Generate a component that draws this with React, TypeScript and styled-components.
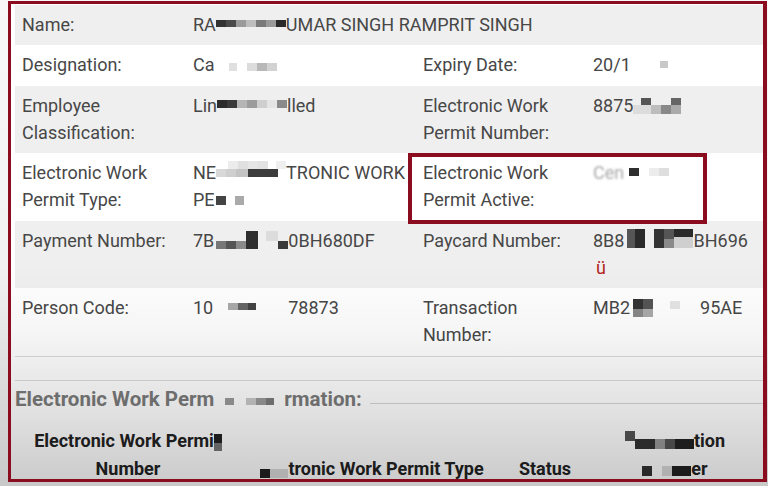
import React from "react";
import styled, { createGlobalStyle } from "styled-components";

const Global = createGlobalStyle`
  html, body { margin: 0; padding: 0; }
  body {
    width: 768px;
    height: 486px;
    overflow: hidden;
    background: linear-gradient(to bottom, #f8f8f8 0%, #f2f2f2 55%, #c8c8c8 100%);
    font-family: Roboto, "Liberation Sans", sans-serif;
  }
`;

type Cell = [number, number, number, number, string];

const MosaicSvg = styled.svg`
  display: inline-block;
  vertical-align: top;
  flex: none;
`;

function Mosaic({ w, h = 27, cells }: { w: number; h?: number; cells: Cell[] }) {
  return (
    <MosaicSvg width={w} height={h} viewBox={`0 0 ${w} ${h}`} aria-hidden="true">
      {cells.map(([x, y, cw, ch, c], i) => (
        <rect key={i} x={x} y={y} width={cw} height={ch} fill={c} />
      ))}
    </MosaicSvg>
  );
}

const Frame = styled.main`
  position: relative;
  box-sizing: border-box;
  margin: 1px 0 0 8px;
  width: 759px;
  height: 481px;
  border: 3px solid #8b0c1e;
  border-right-width: 4px;
  background: #fff;
  padding: 1px 0 0 4px;
  overflow: hidden;

  &::after {
    content: "";
    position: absolute;
    inset: 0;
    pointer-events: none;
    z-index: 5;
    background: linear-gradient(
      to bottom,
      rgba(0, 0, 0, 0) 0px,
      rgba(0, 0, 0, 0) 260px,
      rgba(0, 0, 0, 0.04) 330px,
      rgba(0, 0, 0, 0.12) 410px,
      rgba(0, 0, 0, 0.2) 100%
    );
  }
`;

const Row = styled.div<{ $shade?: boolean }>`
  position: relative;
  display: grid;
  grid-template-columns: 171px 230px 170px 1fr;
  padding: 6px 0 7px 7px;
  background: ${(p) => (p.$shade ? "#efefef" : "#ffffff")};
  font-size: 18px;
  line-height: 27.25px;
  color: #474747;
`;

const Label = styled.span`
  white-space: nowrap;
`;

const Value = styled.span<{ $wide?: boolean }>`
  white-space: nowrap;
  grid-column: ${(p) => (p.$wide ? "2 / -1" : "auto")};
`;

const Highlight = styled.div`
  position: absolute;
  left: 393px;
  top: 0;
  width: 299px;
  height: 71px;
  box-sizing: border-box;
  border: 4px solid #8b0c1e;
  z-index: 2;
  pointer-events: none;
`;

const Blurred = styled.span`
  color: #a9a9a9;
  filter: blur(1.3px);
`;

const Accent = styled.span`
  color: #b3241c;
  padding-left: 3px;
`;

const Spacer = styled.div`
  height: 23px;
  border-top: 1px solid #dcdcdc;
  border-bottom: 1px solid #dcdcdc;
`;

const SectionTitle = styled.h2`
  display: flex;
  align-items: flex-start;
  margin: 5px 0 0;
  font-size: 20.5px;
  line-height: 27px;
  font-weight: 700;
  color: #7a7a7a;
  white-space: nowrap;

  &::after {
    content: "";
    flex: 1;
    height: 1px;
    background: #d6d6d6;
    margin: 17px 0 0 8px;
  }
`;

const TableHead = styled.div`
  display: grid;
  grid-template-columns: 226px 262px 84px 176px;
  margin-top: 14px;
  font-size: 18px;
  line-height: 28px;
  font-weight: 700;
  color: #222;
`;

const Th = styled.div`
  text-align: center;
  align-self: end;
  white-space: nowrap;
`;

export default function App() {
  return (
    <>
      <Global />
      <Frame>
        <Row $shade>
          <Label>Name:</Label>
          <Value $wide>
            RA
            <Mosaic
              w={70}
              cells={[
                [0, 9, 10, 7, "#333"],
                [10, 9, 10, 7, "#4a4a4a"],
                [20, 9, 10, 7, "#9a9a9a"],
                [30, 9, 10, 7, "#bdbdbd"],
                [40, 9, 10, 7, "#7a7a7a"],
                [50, 9, 10, 7, "#9a9a9a"],
                [60, 9, 10, 7, "#2a2a2a"],
              ]}
            />
            UMAR SINGH RAMPRIT SINGH
          </Value>
        </Row>

        <Row>
          <Label>Designation:</Label>
          <Value>
            Ca
            <Mosaic
              w={72}
              cells={[
                [14, 12, 8, 8, "#e0e0e0"],
                [32, 12, 10, 8, "#dcdcdc"],
                [42, 12, 10, 8, "#b8b8b8"],
                [52, 12, 10, 8, "#d2d2d2"],
              ]}
            />
          </Value>
          <Label>Expiry Date:</Label>
          <Value>
            20/1
            <Mosaic w={40} cells={[[29, 10, 8, 7, "#c8c8c8"]]} />
          </Value>
        </Row>

        <Row $shade>
          <Label>
            Employee
            <br />
            Classification:
          </Label>
          <Value>
            Lin
            <Mosaic
              w={70}
              cells={[
                [0, 8, 10, 8, "#2c2c2c"],
                [10, 8, 10, 8, "#3a3a3a"],
                [20, 8, 10, 8, "#b5b5b5"],
                [30, 8, 10, 8, "#9c9c9c"],
                [40, 8, 10, 8, "#cfcfcf"],
                [50, 8, 10, 8, "#e4e4e4"],
                [60, 8, 10, 8, "#8a8a8a"],
              ]}
            />
            lled
          </Value>
          <Label>
            Electronic Work
            <br />
            Permit Number:
          </Label>
          <Value>
            8875
            <Mosaic
              w={50}
              cells={[
                [8, 6, 10, 7, "#555"],
                [38, 6, 10, 7, "#666"],
                [0, 13, 18, 9, "#dcdcdc"],
                [18, 13, 10, 9, "#bdbdbd"],
                [28, 13, 10, 9, "#888"],
                [38, 13, 10, 9, "#aaa"],
              ]}
            />
          </Value>
        </Row>

        <Row>
          <Label>
            Electronic Work
            <br />
            Permit Type:
          </Label>
          <Value>
            NE
            <Mosaic
              w={70}
              cells={[
                [12, 2, 10, 8, "#ececec"],
                [22, 2, 10, 8, "#e0e0e0"],
                [32, 2, 10, 8, "#e6e6e6"],
                [42, 2, 10, 8, "#e2e2e2"],
                [60, 2, 10, 8, "#efefef"],
                [0, 10, 10, 8, "#d8d8d8"],
                [10, 10, 10, 8, "#cfcfcf"],
                [20, 10, 12, 8, "#c4c4c4"],
                [32, 10, 30, 8, "#3c3c3c"],
              ]}
            />
            TRONIC WORK
            <br />
            PE
            <Mosaic
              w={40}
              cells={[
                [1, 10, 10, 9, "#444"],
                [20, 10, 9, 9, "#aaa"],
              ]}
            />
          </Value>
          <Label>
            Electronic Work
            <br />
            Permit Active:
          </Label>
          <Value>
            <Blurred>Cen</Blurred>
            <Mosaic
              w={50}
              cells={[
                [5, 9, 10, 8, "#2e2e2e"],
                [25, 9, 10, 8, "#ececec"],
                [35, 9, 10, 8, "#dedede"],
              ]}
            />
          </Value>
          <Highlight />
        </Row>

        <Row $shade>
          <Label>Payment Number:</Label>
          <Value>
            7B
            <Mosaic
              w={74}
              cells={[
                [2, 14, 10, 8, "#777"],
                [12, 14, 10, 8, "#555"],
                [22, 14, 10, 8, "#8a8a8a"],
                [32, 4, 12, 18, "#2e2e2e"],
                [52, 4, 12, 10, "#dcdcdc"],
                [64, 14, 10, 8, "#3a3a3a"],
              ]}
            />
            0BH680DF
          </Value>
          <Label>Paycard Number:</Label>
          <Value>
            8B8
            <Mosaic
              w={69}
              cells={[
                [3, 2, 8, 19, "#555"],
                [11, 2, 10, 19, "#2a2a2a"],
                [30, 2, 10, 19, "#333"],
                [40, 2, 10, 10, "#555"],
                [50, 2, 19, 8, "#2a2a2a"],
                [40, 12, 10, 9, "#8a8a8a"],
                [50, 10, 19, 11, "#cfcfcf"],
              ]}
            />
            BH696
            <br />
            <Accent>ü</Accent>
          </Value>
        </Row>

        <Row>
          <Label>Person Code:</Label>
          <Value>
            10
            <Mosaic
              w={75}
              cells={[
                [15, 9, 10, 7, "#aaa"],
                [25, 9, 10, 7, "#666"],
                [35, 9, 8, 7, "#444"],
              ]}
            />
            78873
          </Value>
          <Label>
            Transaction
            <br />
            Number:
          </Label>
          <Value>
            MB2
            <Mosaic
              w={70}
              cells={[
                [3, 5, 10, 10, "#333"],
                [13, 5, 10, 10, "#555"],
                [3, 15, 10, 8, "#888"],
                [13, 15, 10, 8, "#aaa"],
                [40, 7, 10, 8, "#e5e5e5"],
              ]}
            />
            95AE
          </Value>
        </Row>

        <Spacer />

        <SectionTitle>
          Electronic Work Perm
          <Mosaic
            w={70}
            cells={[
              [11, 12, 9, 7, "#9a9a9a"],
              [32, 12, 10, 7, "#c8c8c8"],
              [42, 12, 10, 7, "#999"],
              [52, 12, 8, 7, "#7a7a7a"],
            ]}
          />
          rmation:
        </SectionTitle>

        <TableHead>
          <Th>
            Electronic Work Permi
            <Mosaic
              w={8}
              h={28}
              cells={[
                [0, 7, 8, 9, "#222"],
                [0, 16, 8, 8, "#777"],
              ]}
            />
            <br />
            Number
          </Th>
          <Th>
            <Mosaic
              w={28}
              h={28}
              cells={[
                [0, 14, 10, 9, "#222"],
                [10, 14, 18, 9, "#dadada"],
              ]}
            />
            tronic Work Permit Type
          </Th>
          <Th>Status</Th>
          <Th>
            <Mosaic
              w={69}
              h={28}
              cells={[
                [0, 4, 10, 10, "#555"],
                [10, 12, 20, 10, "#333"],
                [30, 12, 10, 10, "#999"],
                [40, 12, 10, 10, "#555"],
                [50, 12, 19, 10, "#222"],
              ]}
            />
            tion
            <br />
            <Mosaic
              w={49}
              h={28}
              cells={[
                [0, 11, 10, 10, "#333"],
                [20, 11, 10, 10, "#dadada"],
                [30, 11, 19, 10, "#222"],
              ]}
            />
            er
          </Th>
        </TableHead>
      </Frame>
    </>
  );
}
